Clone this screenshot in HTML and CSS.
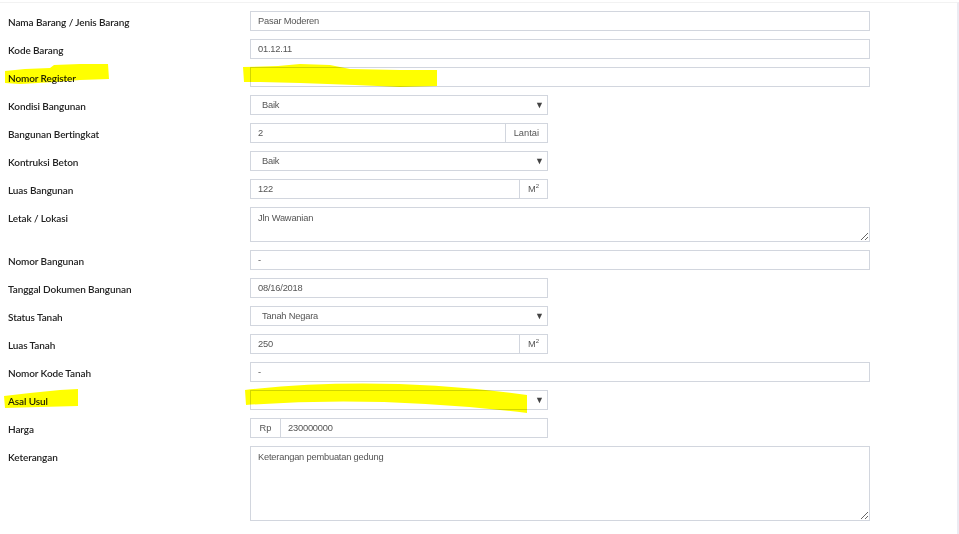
FILE: index.html
```html
<!DOCTYPE html>
<html lang="id">
<head>
    <meta charset="UTF-8">
    <meta name="viewport" content="width=device-width, initial-scale=1.0">
    <title>Data Bangunan</title>
    <link rel="stylesheet" href="styles.css">
</head>
<body>
    <div class="box">
        <div class="form-group">
            <label>Nama Barang / Jenis Barang</label>
            <input type="text" class="form-control" value="Pasar Moderen">
        </div>
        <div class="form-group">
            <label>Kode Barang</label>
            <input type="text" class="form-control" value="01.12.11">
        </div>
        <div class="form-group">
            <label>Nomor Register</label>
            <input type="text" class="form-control" value="">
        </div>
        <div class="form-group">
            <label>Kondisi Bangunan</label>
            <div class="select-wrap half">
                <select class="form-control"><option>Baik</option></select>
            </div>
        </div>
        <div class="form-group">
            <label>Bangunan Bertingkat</label>
            <div class="input-group half">
                <input type="text" class="form-control" value="2">
                <span class="addon">Lantai</span>
            </div>
        </div>
        <div class="form-group">
            <label>Kontruksi Beton</label>
            <div class="select-wrap half">
                <select class="form-control"><option>Baik</option></select>
            </div>
        </div>
        <div class="form-group">
            <label>Luas Bangunan</label>
            <div class="input-group half">
                <input type="text" class="form-control" value="122">
                <span class="addon">M<sup>2</sup></span>
            </div>
        </div>
        <div class="form-group">
            <label>Letak / Lokasi</label>
            <textarea class="form-control short">Jln Wawanian</textarea>
        </div>
        <div class="form-group">
            <label>Nomor Bangunan</label>
            <input type="text" class="form-control" value="-">
        </div>
        <div class="form-group">
            <label>Tanggal Dokumen Bangunan</label>
            <input type="text" class="form-control half" value="08/16/2018">
        </div>
        <div class="form-group">
            <label>Status Tanah</label>
            <div class="select-wrap half">
                <select class="form-control"><option>Tanah Negara</option></select>
            </div>
        </div>
        <div class="form-group">
            <label>Luas Tanah</label>
            <div class="input-group half">
                <input type="text" class="form-control" value="250">
                <span class="addon">M<sup>2</sup></span>
            </div>
        </div>
        <div class="form-group">
            <label>Nomor Kode Tanah</label>
            <input type="text" class="form-control" value="-">
        </div>
        <div class="form-group">
            <label>Asal Usul</label>
            <div class="select-wrap half">
                <select class="form-control"><option></option></select>
            </div>
        </div>
        <div class="form-group">
            <label>Harga</label>
            <div class="input-group half">
                <span class="addon addon-left">Rp</span>
                <input type="text" class="form-control" value="230000000">
            </div>
        </div>
        <div class="form-group">
            <label>Keterangan</label>
            <textarea class="form-control tall">Keterangan pembuatan gedung</textarea>
        </div>
    </div>

    <!-- coretan stabilo di atas screenshot -->
    <svg class="marker" width="959" height="534" viewBox="0 0 959 534">
        <path d="M5,71 L25,69 L50,68 L54,65 L80,64 L108,64 L109,79 L80,80 L55,82 L20,84 L5,83 Z"/>
        <path d="M243,67 L278,66 L300,64 L330,65 L350,69 L400,70 L437,70 L437,86 L400,87 L355,85 L300,83 L260,82 L244,82 Z"/>
        <path d="M4,396 L30,393 L60,390 L78,389 L78,406 L40,407 L5,408 Z"/>
        <path d="M245,390 Q380,375 527,395 L527,413 Q380,395 246,405 Z"/>
    </svg>
</body>
</html>
```

FILE: styles.css
```css
body {
    margin: 0;
    font-family: "Liberation Sans", Arial, sans-serif;
    background: #fff;
}
.box {
    box-sizing: border-box;
    width: 959px;
    margin-top: 2px;
    padding: 8px 0 8px 8px;
    border-top: 1px solid #f2f2f2;
    border-right: 2px solid #ebebf2;
    min-height: 532px;
}
.form-group {
    display: grid;
    grid-template-columns: 242px 620px;
    align-items: start;
    margin-bottom: 8px;
}
.form-group label {
    padding-top: 5px;
    font-family: Lato, "Liberation Sans", Arial, sans-serif;
    font-size: 10px;
    font-weight: 600;
    line-height: 12px;
    letter-spacing: -0.1px;
    color: #222;
}
.form-control {
    display: block;
    box-sizing: border-box;
    width: 100%;
    height: 20px;
    margin: 0;
    padding: 0 7px;
    border: 1px solid #d2d6de;
    border-radius: 0;
    background: #fff;
    font-family: "Liberation Sans", Arial, sans-serif;
    font-size: 9.3px;
    letter-spacing: -0.2px;
    color: #555;
    outline: none;
}
.half {
    width: 298px;
}
.select-wrap {
    position: relative;
}
.select-wrap select {
    appearance: none;
    -webkit-appearance: none;
    padding-left: 11px;
}
.select-wrap::after {
    content: "\25BC";
    position: absolute;
    right: 4px;
    top: 5px;
    font-size: 9px;
    line-height: 10px;
    color: #444;
    pointer-events: none;
}
.input-group {
    display: flex;
}
.input-group .form-control {
    flex: 1;
    width: auto;
    min-width: 0;
}
.addon {
    box-sizing: border-box;
    height: 20px;
    padding: 0 8px;
    border: 1px solid #d2d6de;
    border-left: none;
    font-size: 9.3px;
    line-height: 18px;
    color: #555;
    background: #fff;
}
.addon-left {
    border-left: 1px solid #d2d6de;
    border-right: none;
    width: 30px;
    text-align: center;
    padding: 0;
}
.addon sup {
    font-size: 6px;
    line-height: 0;
    vertical-align: 4px;
}
textarea.form-control {
    padding: 5px 7px;
    line-height: 11px;
    resize: both;
}
textarea.short {
    height: 35px;
}
textarea.tall {
    height: 75px;
}
.marker {
    position: absolute;
    left: 0;
    top: 0;
    pointer-events: none;
    mix-blend-mode: multiply;
}
.marker path {
    fill: #ffff00;
}
```
